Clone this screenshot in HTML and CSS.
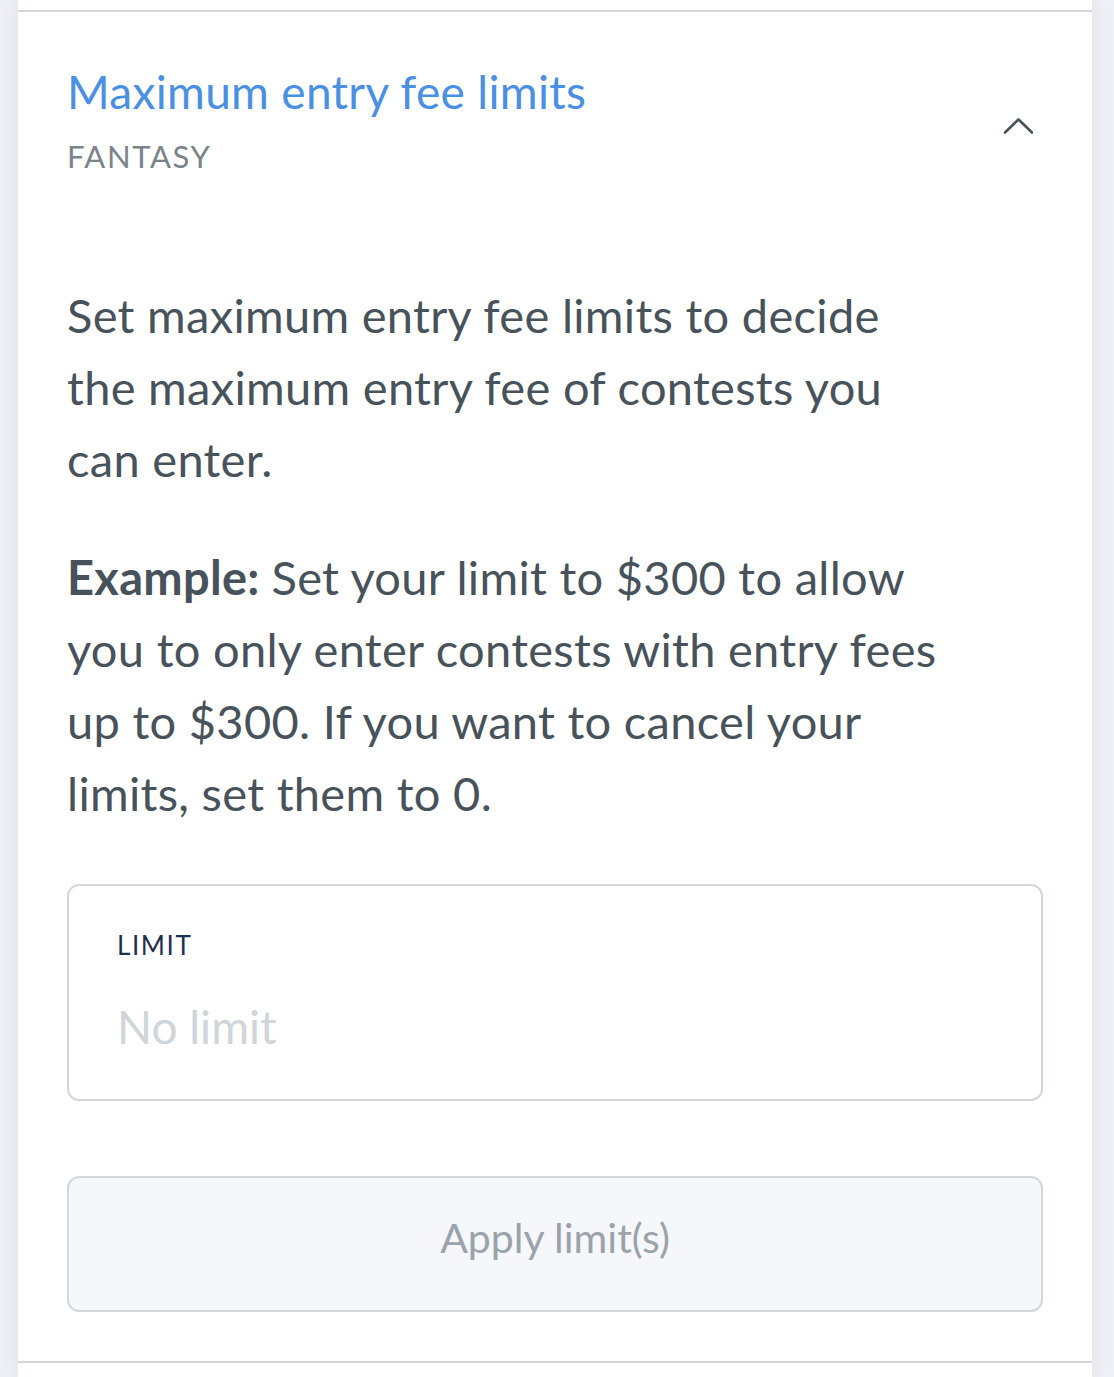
FILE: index.html
```html
<!DOCTYPE html>
<html lang="en">
<head>
<meta charset="utf-8">
<title>Maximum entry fee limits</title>
<link rel="stylesheet" href="styles.css">
</head>
<body>
<div class="page">
  <div class="card-stub card-stub-top"></div>
  <section class="card">
    <header class="card-header">
      <div class="card-titles">
        <h2 class="card-title">Maximum entry fee limits</h2>
        <div class="card-category">FANTASY</div>
      </div>
      <svg class="chevron" width="30" height="18" viewBox="0 0 30 18" aria-hidden="true">
        <path d="M2 15.5 L15.5 2.5 L29 15.5" fill="none" stroke="#47525a" stroke-width="2.6" stroke-linecap="round" stroke-linejoin="round"/>
      </svg>
    </header>
    <div class="card-body">
      <p class="copy">Set maximum entry fee limits to decide the maximum entry fee of contests you can enter.</p>
      <p class="copy"><strong class="copy-lead">Example: </strong>Set your limit to $300 to allow you to only enter contests with entry fees up to $300. If you want to cancel your limits, set them to 0.</p>
      <label class="field">
        <span class="field-label">LIMIT</span>
        <input class="field-input" type="text" placeholder="No limit">
      </label>
      <button class="apply-btn" type="button" disabled>Apply limit(s)</button>
    </div>
  </section>
  <div class="card-stub card-stub-bottom"></div>
</div>
</body>
</html>
```
FILE: styles.css
```css
html, body {
  margin: 0;
  padding: 0;
}
body {
  background: #eef0f5;
  font-family: Lato, "Open Sans", Arial, sans-serif;
  color: #47525a;
  width: 1114px;
  height: 1377px;
  overflow: hidden;
}
.page {
  margin: 0 22px 0 18px;
  background: #ffffff;
  box-shadow: 0 0 18px rgba(40, 50, 80, 0.08);
  height: 1377px;
  display: flex;
  flex-direction: column;
}
.card-stub-top {
  height: 10px;
  background: #fff;
}
.card {
  background: #fff;
  border-top: 2px solid #d3d7db;
  border-bottom: 2px solid #d3d7db;
  padding: 50px 49px 49px 49px;
}
.card-stub-bottom {
  flex: 1;
  background: #fff;
}
.card-header {
  display: flex;
  justify-content: space-between;
  align-items: flex-start;
}
.card-title {
  margin: 0;
  font-size: 46px;
  line-height: 60px;
  letter-spacing: 0.3px;
  font-weight: 400;
  color: #4a90e2;
}
.card-category {
  margin-top: 14px;
  font-size: 31px;
  line-height: 40px;
  letter-spacing: 1.6px;
  color: #7a8389;
}
.chevron {
  display: block;
  margin-top: 55px;
  margin-right: 10px;
}
.card-body {
  padding-top: 103px;
}
.copy {
  margin: 0 0 46px 0;
  max-width: 878px;
  font-size: 47px;
  line-height: 72px;
  letter-spacing: 0.3px;
  color: #47525a;
}
.copy-lead {
  font-weight: 700;
}
.field {
  display: flex;
  flex-direction: column;
  border: 2px solid #d3d7db;
  border-radius: 12px;
  height: 217px;
  box-sizing: border-box;
  padding: 43px 48px 0 48px;
  margin-top: 55px;
}
.field-label {
  font-size: 26px;
  line-height: 32px;
  letter-spacing: 1.6px;
  color: #1f2f50;
}
.field-input {
  margin-top: 38px;
  height: 56px;
  border: 0;
  padding: 0;
  outline: none;
  background: transparent;
  font-family: inherit;
  font-size: 46px;
  line-height: 56px;
  color: #47525a;
}
.field-input::placeholder {
  color: #d0d5d9;
  opacity: 1;
}
.apply-btn {
  display: block;
  width: 100%;
  margin-top: 75px;
  height: 136px;
  padding: 0 0 13px 0;
  border: 2px solid #d3d7db;
  border-radius: 12px;
  background: #f5f7fa;
  font-family: inherit;
  font-size: 41px;
  color: #9aa3aa;
}
```
